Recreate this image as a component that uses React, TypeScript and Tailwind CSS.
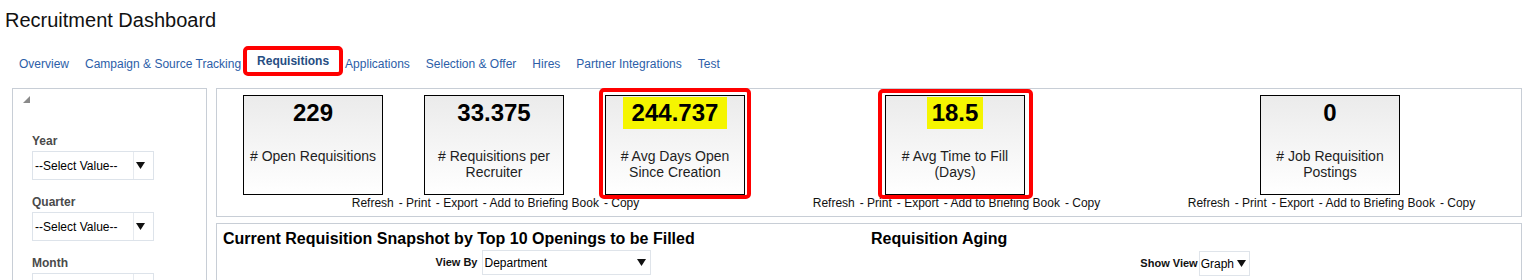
// ─── Recruitment Dashboard (Requisitions tab) ───────────
const tabs = [
  'Overview',
  'Campaign & Source Tracking',
  'Requisitions',
  'Applications',
  'Selection & Offer',
  'Hires',
  'Partner Integrations',
  'Test',
]

function Caret() {
  return (
    <svg width="9" height="7" viewBox="0 0 9 7" className="shrink-0">
      <path d="M0 0h9L4.5 7z" fill="#111" />
    </svg>
  )
}

function FilterSelect() {
  return (
    <div className="flex h-[29px] w-[122px] items-stretch border border-[#dde3ea] bg-white">
      <div className="flex w-[101px] items-center border-r border-[#e6eaef] pl-[2px] text-[12px] text-black">
        --Select Value--
      </div>
      <div className="flex flex-1 items-center pl-[2px]">
        <Caret />
      </div>
    </div>
  )
}

function Filter({ label }: { label: string }) {
  return (
    <div className="flex flex-col">
      <div className="mb-[3px] text-[12px] font-bold leading-[14px] text-[#4a4a4a]">{label}</div>
      <FilterSelect />
    </div>
  )
}

type Tile = {
  value: string
  label: string[]
  hl?: string
  ring?: string
}

function KpiTile({ value, label, hl, ring }: Tile) {
  return (
    <div className="relative h-[100px] w-[140px] shrink-0 border border-black bg-gradient-to-b from-[#ebebeb] to-white">
      <div className="flex justify-center pt-[1px]">
        <span className={`text-[24px] font-bold leading-[32px] text-black ${hl ? 'bg-[#f5f500] ' + hl : ''}`}>
          {value}
        </span>
      </div>
      <div className="mt-[19px] text-center text-[14px] leading-[16px] text-[#1e1e1e]">
        {label.map((l) => (
          <div key={l}>{l}</div>
        ))}
      </div>
      {ring && <div className={`pointer-events-none absolute rounded-[5px] border-[4px] border-[#ff0000] ${ring}`} />}
    </div>
  )
}

function Links() {
  return (
    <div className="flex gap-[5px] pl-[3px] pt-[1px] text-[12px] leading-[14px] text-[#111]">
      <span>Refresh</span>
      <span>- Print</span>
      <span>- Export</span>
      <span>- Add to Briefing Book</span>
      <span>- Copy</span>
    </div>
  )
}

export default function App() {
  return (
    <div className="h-[280px] w-[1530px] overflow-hidden bg-white font-['Liberation_Sans',Arial,sans-serif]">
      <h1 className="pl-[5px] pt-[8px] text-[20px] leading-[24px] text-[#111]">Recruitment Dashboard</h1>

      {/* Tabs */}
      <div className="flex h-[44px] items-end pl-[11px] text-[12px] leading-[14px]">
        {tabs.map((t) =>
          t === 'Requisitions' ? (
            <div key={t} className="relative border-b-[3px] border-[#0a72d0] px-[8px] pb-[5px] font-bold text-[#264d82]">
              {t}
              <div className="pointer-events-none absolute -bottom-[3px] -left-[6px] -right-[6px] -top-[8px] rounded-[5px] border-[4px] border-[#ff0000]" />
            </div>
          ) : (
            <div key={t} className="px-[8px] pb-[5px] text-[#2c5ea8]">
              {t}
            </div>
          ),
        )}
      </div>

      <div className="mt-[12px] flex gap-[9px] pl-[12px]">
        {/* Filters */}
        <div className="h-[200px] w-[195px] shrink-0 border border-[#c8ced6] pl-[10px] pt-[7px]">
          <svg width="7" height="7" viewBox="0 0 7 7">
            <path d="M7 0v7H0z" fill="#8a8a8a" />
          </svg>
          <div className="ml-[9px] mt-[31px] flex flex-col gap-[15px]">
            <Filter label="Year" />
            <Filter label="Quarter" />
            <Filter label="Month" />
          </div>
        </div>

        <div className="flex w-[1306px] shrink-0 flex-col gap-[6px]">
          {/* KPI tiles */}
          <div className="flex h-[129px] border border-[#c8ced6] pt-[6px]">
            <div className="flex w-[554px] flex-col items-center">
              <div className="flex gap-[41px]">
                <KpiTile value="229" label={['# Open Requisitions']} />
                <KpiTile value="33.375" label={['# Requisitions per', 'Recruiter']} />
                <KpiTile
                  value="244.737"
                  label={['# Avg Days Open', 'Since Creation']}
                  hl="px-[9px]"
                  ring="-left-[7px] -right-[7px] -top-[8px] -bottom-[5px]"
                />
              </div>
              <Links />
            </div>
            <div className="flex w-[368px] flex-col items-center">
              <KpiTile
                value="18.5"
                label={['# Avg Time to Fill', '(Days)']}
                hl="px-[5px]"
                ring="-left-[8px] -right-[9px] -top-[7px] -bottom-[5px]"
              />
              <Links />
            </div>
            <div className="flex w-[382px] flex-col items-center">
              <KpiTile value="0" label={['# Job Requisition', 'Postings']} />
              <Links />
            </div>
          </div>

          {/* Sections */}
          <div className="flex h-[80px] border border-[#c8ced6]">
            <div className="flex w-[652px] flex-col">
              <div className="pl-[6px] pt-[5px] text-[16px] font-bold leading-[20px] text-black">
                Current Requisition Snapshot by Top 10 Openings to be Filled
              </div>
              <div className="mt-[1px] flex items-center justify-center gap-[4px]">
                <span className="text-[11px] font-bold text-[#111]">View By</span>
                <div className="flex h-[25px] w-[169px] items-center justify-between border border-[#dfe4ea] pl-[2px] pr-[4px] text-[12px] text-black">
                  <span>Department</span>
                  <Caret />
                </div>
              </div>
            </div>
            <div className="flex w-[652px] flex-col">
              <div className="pl-[2px] pt-[5px] text-[16px] font-bold leading-[20px] text-black">Requisition Aging</div>
              <div className="mt-[2px] flex items-center justify-center gap-[1px]">
                <span className="text-[11px] font-bold text-[#111]">Show View</span>
                <div className="flex h-[25px] w-[51px] items-center gap-[3px] border border-[#dfe4ea] pl-[1px] text-[12px] text-black">
                  <span>Graph</span>
                  <Caret />
                </div>
              </div>
            </div>
          </div>
        </div>
      </div>
    </div>
  )
}
